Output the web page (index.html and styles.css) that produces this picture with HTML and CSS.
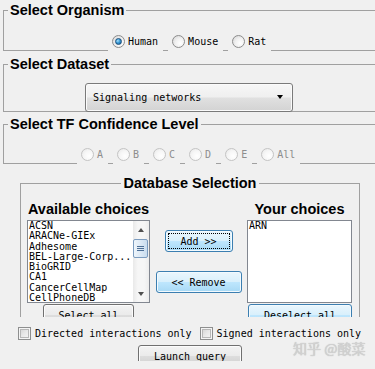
FILE: index.html
```html
<!DOCTYPE html>
<html lang="en">
<head>
<meta charset="utf-8">
<title>Query</title>
<link rel="stylesheet" href="styles.css">
</head>
<body>
<div class="app">
  <fieldset class="group wide g-organism">
    <legend class="title">Select Organism</legend>
    <div class="optrow organism-row">
      <label class="opt"><span class="radio checked"></span>Human</label>
      <label class="opt"><span class="radio"></span>Mouse</label>
      <label class="opt"><span class="radio"></span>Rat</label>
    </div>
  </fieldset>

  <fieldset class="group wide g-dataset">
    <legend class="title">Select Dataset</legend>
    <div class="optrow dataset-row">
      <div class="combo"><span class="combo-text">Signaling networks</span><span class="caret"></span></div>
    </div>
  </fieldset>

  <fieldset class="group wide g-conf">
    <legend class="title">Select TF Confidence Level</legend>
    <div class="optrow conf-row">
      <label class="opt disabled"><span class="radio"></span>A</label>
      <label class="opt disabled"><span class="radio"></span>B</label>
      <label class="opt disabled"><span class="radio"></span>C</label>
      <label class="opt disabled"><span class="radio"></span>D</label>
      <label class="opt disabled"><span class="radio"></span>E</label>
      <label class="opt disabled"><span class="radio"></span>All</label>
    </div>
  </fieldset>

  <fieldset class="group db">
    <legend class="title center">Database Selection</legend>
    <div class="db-cols">
      <div class="col col-left">
        <div class="col-title">Available choices</div>
        <div class="listbox">
          <ul class="items">
            <li>ACSN</li>
            <li>ARACNe-GIEx</li>
            <li>Adhesome</li>
            <li>BEL-Large-Corp...</li>
            <li>BioGRID</li>
            <li>CA1</li>
            <li>CancerCellMap</li>
            <li>CellPhoneDB</li>
          </ul>
          <div class="scrollbar">
            <div class="sb-btn"><span class="arrow up"></span></div>
            <div class="sb-track"><div class="thumb"><i></i><i></i><i></i></div></div>
            <div class="sb-btn"><span class="arrow down"></span></div>
          </div>
        </div>
        <button class="btn grey select-all">Select all</button>
      </div>
      <div class="col col-mid">
        <button class="btn blue focus add">Add &gt;&gt;</button>
        <button class="btn blue remove">&lt;&lt; Remove</button>
      </div>
      <div class="col col-right">
        <div class="col-title">Your choices</div>
        <div class="listbox">
          <ul class="items"><li>ARN</li></ul>
        </div>
        <button class="btn blue deselect">Deselect all</button>
      </div>
    </div>
  </fieldset>

  <div class="checks">
    <label class="check first"><span class="box"></span>Directed interactions only</label>
    <label class="check"><span class="box"></span>Signed interactions only</label>
  </div>

  <div class="launch-wrap">
    <button class="btn grey launch">Launch query</button>
  </div>

  <div class="watermark">知乎 @酸菜</div>
</div>
</body>
</html>
```

FILE: styles.css
```css
html, body {
  margin: 0;
  padding: 0;
}
body {
  width: 375px;
  height: 369px;
  overflow: hidden;
  background: #f0f0f0;
  font-family: "DejaVu Sans Mono", "Liberation Mono", monospace;
  font-size: 10px;
  color: #000;
}
.app {
  position: relative;
  width: 375px;
  height: 369px;
  overflow: hidden;
}

/* group frames */
.group {
  margin: 0;
  padding: 0;
  min-width: 0;
  border: 0;
  border-left: 1px solid #a0a0a0;
  border-top: 1px solid #a0a0a0;
}
.wide {
  margin-left: 3px;
  width: 430px;
}
.title {
  margin-left: 4px;
  padding: 0 2px;
  font-family: "Liberation Sans", Arial, sans-serif;
  font-weight: bold;
  font-size: 14.5px;
  line-height: 16px;
}
.title.center {
  margin-left: auto;
  margin-right: auto;
  padding: 0 3px;
}
.g-organism { margin-top: 2px; }
.g-dataset { margin-top: 5px; }
.g-conf { margin-top: 4px; }

/* option rows sitting on the frame's bottom line */
.optrow {
  display: flex;
  align-items: flex-end;
  gap: 5px;
  background: linear-gradient(#a0a0a0, #a0a0a0) left bottom / 100% 1px no-repeat;
}
.organism-row { margin-top: 16px; padding-left: 104px; }
.conf-row { margin-top: 15px; padding-left: 73px; }
.dataset-row { margin-top: 11px; padding-left: 81px; }

.opt {
  display: flex;
  align-items: center;
  gap: 3px;
  height: 17px;
  box-sizing: border-box;
  padding: 0 5px 2px 4px;
  background: #f0f0f0;
  white-space: nowrap;
}
.opt.disabled { color: #8d8d8d; }

.radio {
  position: relative;
  width: 13px;
  height: 13px;
  box-sizing: border-box;
  border-radius: 50%;
  border: 1px solid #8c8c8c;
  background: radial-gradient(circle at 65% 65%, #ffffff 0%, #f1f1f1 45%, #d2d2d2 100%);
  flex: none;
}
.radio.checked::after {
  content: "";
  position: absolute;
  left: 2px;
  top: 2px;
  width: 7px;
  height: 7px;
  box-sizing: border-box;
  border-radius: 50%;
  border: 1px solid #1b4f7c;
  background: radial-gradient(circle at 35% 35%, #a8e2fb 0%, #3a9ad6 45%, #10568f 100%);
}
.disabled .radio {
  border-color: #c4c4c4;
  background: radial-gradient(circle at 65% 65%, #ffffff 0%, #f6f6f6 50%, #e6e6e6 100%);
}

/* dropdown */
.combo {
  display: flex;
  align-items: center;
  justify-content: space-between;
  width: 208px;
  height: 29px;
  box-sizing: border-box;
  padding: 0 9px 1px 7px;
  border: 1px solid #7a7a7a;
  border-radius: 3px;
  background: linear-gradient(#f7f7f7 0%, #efefef 48%, #e0e0e0 52%, #d3d3d3 100%);
  box-shadow: inset 0 0 0 1px #fbfbfb;
}
.caret {
  width: 0;
  height: 0;
  border-left: 3.5px solid transparent;
  border-right: 3.5px solid transparent;
  border-top: 4px solid #000;
}

/* database selection */
.db {
  margin: 11px 0 0 20px;
  width: 338px;
  border-right: 1px solid #a0a0a0;
}
.db-cols {
  display: flex;
  align-items: flex-start;
  height: 126px;
  box-sizing: border-box;
  padding: 10px 5px 0 6px;
  overflow: hidden;
}
.col {
  display: flex;
  flex-direction: column;
  flex: none;
}
.col > * { flex: none; }
.col-left { width: 123px; align-items: center; }
.col-mid { width: 97px; align-items: center; }
.col-right { width: 105px; align-items: flex-start; }
.col-title {
  align-self: stretch;
  text-align: center;
  font-family: "Liberation Sans", Arial, sans-serif;
  font-weight: bold;
  font-size: 14.5px;
  line-height: 16px;
  margin-bottom: 3px;
  white-space: nowrap;
}
.listbox {
  display: flex;
  align-self: stretch;
  height: 83px;
  box-sizing: border-box;
  border: 1px solid #828790;
  background: #fff;
  overflow: hidden;
}
.items {
  flex: 1;
  list-style: none;
  margin: 0;
  padding: 0 0 0 1px;
  white-space: nowrap;
  overflow: hidden;
}
.items li {
  height: 10.25px;
  line-height: 10px;
}
.scrollbar {
  width: 16px;
  display: flex;
  flex-direction: column;
  background: linear-gradient(to right, #e9e9e9, #f6f6f6 30%, #f6f6f6 70%, #ececec);
}
.sb-btn {
  height: 17px;
  display: flex;
  align-items: center;
  justify-content: center;
}
.arrow {
  width: 0;
  height: 0;
  border-left: 3.5px solid transparent;
  border-right: 3.5px solid transparent;
}
.arrow.up { border-bottom: 4px solid #505050; }
.arrow.down { border-top: 4px solid #505050; }
.sb-track {
  flex: 1;
  padding-top: 1px;
}
.thumb {
  height: 19px;
  margin: 0 1px 0 0;
  box-sizing: border-box;
  border: 1px solid #7c9cbf;
  border-radius: 2px;
  background: linear-gradient(to right, #eef5fb, #dce9f5 50%, #c9dcee);
  display: flex;
  flex-direction: column;
  align-items: center;
  justify-content: center;
  gap: 1px;
}
.thumb i {
  display: block;
  width: 7px;
  height: 1px;
  background: #4d6f96;
}

/* buttons */
.btn {
  display: block;
  height: 22px;
  box-sizing: border-box;
  margin: 0;
  padding: 0;
  border-radius: 3px;
  font-family: "DejaVu Sans Mono", "Liberation Mono", monospace;
  font-size: 10px;
  color: #000;
  text-align: center;
  white-space: nowrap;
}
.btn.grey {
  border: 1px solid #707070;
  background: linear-gradient(#f3f3f3 0%, #ebebeb 48%, #dddddd 52%, #cfcfcf 100%);
  box-shadow: inset 0 0 0 1px #fcfcfc;
}
.btn.blue {
  border: 1px solid #3c7fb1;
  background: linear-gradient(#eaf6fd 0%, #d9f0fc 48%, #bee6fd 52%, #a7d9f5 100%);
  box-shadow: inset 0 0 0 1px #f3fafe;
}
.btn.focus {
  outline: 1px dotted #000;
  outline-offset: -4px;
}
.select-all { width: 91px; margin-top: 1px; }
.deselect { width: 104px; margin: 1px 0 0 1px; }
.add { width: 68px; margin-top: 29px; }
.remove { width: 86px; margin-top: 19px; }

/* checkboxes */
.checks {
  display: flex;
  align-items: center;
  height: 13px;
  margin-top: 10px;
  padding-left: 18px;
}
.check {
  display: flex;
  align-items: center;
  gap: 4px;
  white-space: nowrap;
}
.check.first { margin-right: 8px; }
.box {
  width: 13px;
  height: 13px;
  box-sizing: border-box;
  border: 1px solid #8e8f8f;
  background: linear-gradient(135deg, #cfcfcf 0%, #e8e8e8 50%, #f7f7f7 100%);
  box-shadow: inset 0 0 0 1px #f4f4f4, inset 0 0 0 2px #b7b7b7;
  flex: none;
}

/* launch */
.launch-wrap {
  height: 16px;
  margin-top: 5px;
  overflow: hidden;
}
.launch { width: 104px; margin-left: 138px; }

.watermark {
  position: absolute;
  left: 293px;
  top: 339px;
  font-family: "Noto Sans CJK SC", sans-serif;
  font-size: 14px;
  line-height: 18px;
  color: #d2d2d2;
  text-shadow: 0 0 1px #b0b0b0;
  white-space: nowrap;
}
```
